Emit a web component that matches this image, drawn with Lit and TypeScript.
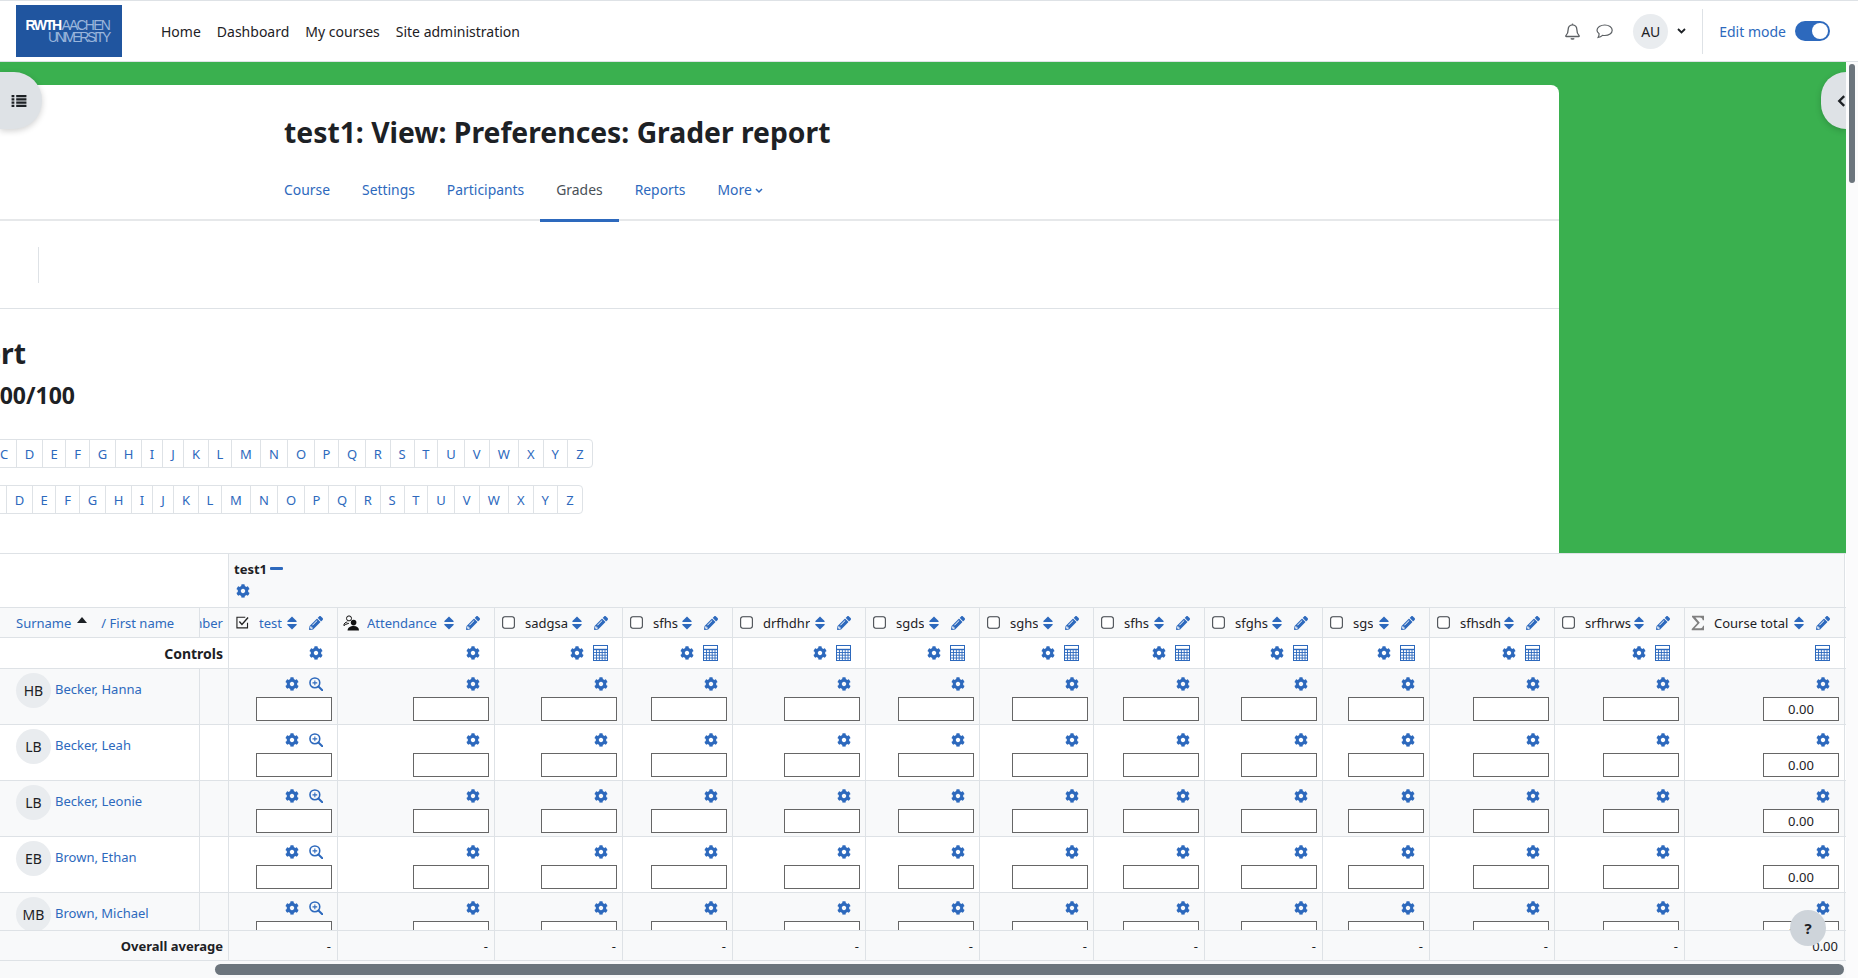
import { LitElement, html, css, nothing } from "lit";
import { customElement } from "lit/decorators.js";

const cog = html`<svg class="ico" viewBox="0 0 512 512"><path fill="currentColor" d="M487.4 315.7l-42.6-24.6c4.3-23.2 4.3-47 0-70.2l42.6-24.6c4.9-2.8 7.1-8.6 5.5-14-11.1-35.6-30-67.8-54.7-94.6-3.8-4.1-10-5.1-14.8-2.3L380.8 110c-17.9-15.4-38.5-27.3-60.8-35.1V25.8c0-5.6-3.9-10.5-9.4-11.7-36.7-8.2-74.3-7.8-109.2 0-5.5 1.2-9.4 6.1-9.4 11.7V75c-22.2 7.9-42.8 19.8-60.8 35.1L88.7 85.5c-4.9-2.8-11-1.9-14.8 2.3-24.7 26.7-43.6 58.9-54.7 94.6-1.7 5.4.6 11.2 5.5 14L67.3 221c-4.3 23.2-4.3 47 0 70.2l-42.6 24.6c-4.9 2.8-7.1 8.6-5.5 14 11.1 35.6 30 67.8 54.7 94.6 3.8 4.1 10 5.1 14.8 2.3l42.6-24.6c17.9 15.4 38.5 27.3 60.8 35.1v49.2c0 5.6 3.9 10.5 9.4 11.7 36.7 8.2 74.3 7.8 109.2 0 5.5-1.2 9.4-6.1 9.4-11.7v-49.2c22.2-7.9 42.8-19.8 60.8-35.1l42.6 24.6c4.9 2.8 11 1.9 14.8-2.3 24.7-26.7 43.6-58.9 54.7-94.6 1.5-5.5-.7-11.3-5.6-14.1zM256 336c-44.1 0-80-35.9-80-80s35.9-80 80-80 80 35.9 80 80-35.9 80-80 80z"/></svg>`;

const pencil = html`<svg class="ico" viewBox="0 0 512 512"><path fill="currentColor" d="M497.9 142.1l-46.1 46.1c-4.7 4.7-12.3 4.7-17 0l-111-111c-4.7-4.7-4.7-12.3 0-17l46.1-46.1c18.7-18.7 49.1-18.7 67.9 0l60.1 60.1c18.8 18.7 18.8 49.1 0 67.9zM284.2 99.8L21.6 362.4.4 483.9c-2.9 16.4 11.4 30.6 27.8 27.8l121.5-21.3 262.6-262.6c4.7-4.7 4.7-12.3 0-17l-111-111c-4.8-4.7-12.4-4.7-17.1 0zM124.1 339.9c-5.5-5.5-5.5-14.3 0-19.8l154-154c5.5-5.5 14.3-5.5 19.8 0s5.5 14.3 0 19.8l-154 154c-5.5 5.5-14.3 5.5-19.8 0zM88 424h48v36.3l-64.5 11.3-31.1-31.1L51.7 376H88v48z"/></svg>`;

const zoomIco = html`<svg class="ico" viewBox="0 0 16 16" fill="none" stroke="currentColor"><circle cx="6.7" cy="6.7" r="5.6" stroke-width="1.8"/><path d="M6.7 4v5.4M4 6.7h5.4" stroke-width="1.2"/><path d="M10.8 10.8l4.4 4.4" stroke-width="2.3" stroke-linecap="round"/></svg>`;

const sortIco = html`<svg class="sort" viewBox="0 0 10 14"><path fill="currentColor" d="M5 .5l4.6 4.6c.3.4.1.9-.4.9H.8c-.5 0-.7-.5-.4-.9zM5 13.500L.4 8.900C.1 8.500.3 8 .8 8h8.400c.5 0 .7.5.4.9z"/></svg>`;

const calc = html`<svg class="calc" viewBox="0 0 15 16" fill="none" stroke="currentColor"><rect x=".5" y=".5" width="14" height="15" stroke-width="1"/><path d="M.5 4.500h14" stroke-width="1.400"/><path d="M.5 7.500h14M.5 10.200h14M.5 13h14M3.500 5v10M6.400 5v10M9.200 5v10M12 5v10" stroke-width=".9"/></svg>`;

const boxIco = html`<svg class="kind" viewBox="0 0 14 14"><rect x=".7" y=".7" width="12.600" height="12.600" rx="2.400" fill="#fff" stroke="#3a3f45" stroke-width="1.100"/></svg>`;

const checkedIco = html`<svg class="kind" viewBox="0 0 14 14" fill="none" stroke="#222"><path d="M12.400 7.400v5.400H1V1.400h9" stroke-width="1.200"/><path d="M3.600 6l2.800 3L13 1.600" stroke-width="1.500"/></svg>`;

const attendanceIco = html`<svg class="kind wide" viewBox="0 0 16 16"><circle cx="6" cy="3.400" r="2.500" fill="none" stroke="#111" stroke-width="1"/><path d="M.8 10.600c0-2.400 2-3.400 3.600-3.600M6 8.200c-1 .6-2.600.4-5 2.400" fill="none" stroke="#111" stroke-width="1"/><circle cx="10.600" cy="7.600" r="2.800" fill="#111"/><path d="M4.600 15.600c0-3 2.600-4.600 6-4.600s5.400 1.600 5.400 4.600z" fill="#111"/></svg>`;

const sigmaIco = html`<svg class="kind wide" viewBox="0 0 14 16"><path fill="#808080" d="M1 .8h12v4.400h-1.300c-.3-1.700-1-2.600-2.800-2.600H4.400L8.800 7.800 3.600 13.200h6c1.500 0 2.100-.9 2.400-2.500H13v4.500H.7v-1.100l5.600-6L1 1.900z"/></svg>`;

const letterWidths: Record<string, number> = {
  A: 27, B: 25, C: 25, D: 26, E: 23, F: 24, G: 26, H: 26, I: 21, J: 21, K: 25, L: 23, M: 29,
  N: 27, O: 27, P: 24, Q: 27, R: 24.5, S: 24, T: 23.6, U: 26.6, V: 25, W: 29, X: 25, Y: 24, Z: 24.6,
};

const tabs = ["Course", "Settings", "Participants", "Grades", "Reports"];

const students = [
  ["HB", "Becker, Hanna"],
  ["LB", "Becker, Leah"],
  ["LB", "Becker, Leonie"],
  ["EB", "Brown, Ethan"],
  ["MB", "Brown, Michael"],
];

type Col = { name: string; kind?: "checked" | "attendance" | "sigma"; link?: boolean };

const columns: Col[] = [
  { name: "test", kind: "checked", link: true },
  { name: "Attendance", kind: "attendance", link: true },
  { name: "sadgsa" },
  { name: "sfhs" },
  { name: "drfhdhr" },
  { name: "sgds" },
  { name: "sghs" },
  { name: "sfhs" },
  { name: "sfghs" },
  { name: "sgs" },
  { name: "sfhsdh" },
  { name: "srfhrws" },
  { name: "Course total", kind: "sigma" },
];

const kindIcon = (c: Col) =>
  c.kind === "checked" ? checkedIco : c.kind === "attendance" ? attendanceIco : c.kind === "sigma" ? sigmaIco : boxIco;

@customElement("app-root")
export class AppRoot extends LitElement {
  static styles = css`
    :host {
      display: block;
      width: 1858px;
      height: 978px;
      overflow: hidden;
      background: #fff;
      font-family: "Noto Sans", "Open Sans", sans-serif;
      color: #1d2125;
      --blue: #2d69bd;
      --line: #dee2e6;
      --soft: #f8f9fa;
      --cols: 200px 29px 109px 157px 128px 110px 133px 114px 114px 111px 118px 107px 125px 130px 160px;
    }
    * {
      box-sizing: border-box;
    }
    a {
      color: var(--blue);
      text-decoration: none;
    }

    /* top bar */
    .nav {
      height: 62px;
      display: flex;
      align-items: center;
      border-top: 1px solid var(--line);
      border-bottom: 1px solid var(--line);
      padding: 0 28px 0 16px;
      font-size: 14px;
    }
    .logo {
      width: 106px;
      height: 52px;
      background: #20559f;
      display: flex;
      flex-direction: column;
      align-items: flex-end;
      justify-content: center;
      padding-right: 13px;
      font-family: "Liberation Sans", sans-serif;
      font-size: 14px;
      color: #9ab6dc;
    }
    .logo span {
      display: block;
      height: 12px;
      line-height: 12px;
      letter-spacing: -1.8px;
      white-space: nowrap;
    }
    .logo span + span {
      letter-spacing: -2.3px;
    }
    .logo b {
      color: #fff;
      letter-spacing: -1.7px;
      margin-right: 1px;
    }
    .menu {
      display: flex;
      gap: 16px;
      margin-left: 39px;
    }
    .menu a {
      color: #1d2125;
    }
    .right {
      margin-left: auto;
      display: flex;
      align-items: center;
    }
    .bell {
      width: 15px;
      height: 17px;
      color: #5c6064;
    }
    .chat {
      width: 17px;
      height: 15px;
      margin-left: 16px;
      color: #5c6064;
    }
    .avatar {
      width: 35px;
      height: 35px;
      border-radius: 50%;
      background: #e9ecef;
      display: flex;
      align-items: center;
      justify-content: center;
      font-size: 14px;
      flex: none;
    }
    .right .avatar {
      margin-left: 20px;
    }
    .caret {
      width: 9px;
      height: 6px;
      margin-left: 9px;
    }
    .divider {
      width: 1px;
      height: 45px;
      background: var(--line);
      margin: 0 16px;
    }
    .switch {
      width: 35px;
      height: 20px;
      border-radius: 10px;
      background: var(--blue);
      margin-left: 9px;
      padding: 2px 2px 2px 17px;
    }
    .switch i {
      display: block;
      width: 16px;
      height: 16px;
      border-radius: 50%;
      background: #fff;
    }

    /* page */
    .body {
      display: flex;
      height: 916px;
    }
    .main {
      position: relative;
      width: 1846px;
      overflow: hidden;
    }
    .rail {
      width: 12px;
      background: #fbfbfc;
      padding: 2px 3px 0;
    }
    .rail i {
      display: block;
      height: 119px;
      border-radius: 3px;
      background: #6c757d;
    }
    .green {
      height: 491px;
      background: #3ab04f;
      padding-top: 23px;
    }
    .card {
      width: 1559px;
      height: 468px;
      background: #fff;
      border-radius: 0 8px 0 0;
      overflow: hidden;
    }
    .head {
      height: 136px;
      border-bottom: 2px solid #e6e8ea;
      padding: 28px 0 0 284px;
    }
    h1 {
      margin: 0;
      font-size: 28.3px;
      line-height: 38px;
      font-weight: 700;
      white-space: nowrap;
    }
    .tabs {
      display: flex;
      margin: 21px 0 0 -16px;
      font-size: 13.9px;
    }
    .tabs a {
      height: 50px;
      padding: 0 16px;
      line-height: 36px;
      white-space: nowrap;
    }
    .tabs a.on {
      color: #495057;
      border-bottom: 3px solid var(--blue);
    }
    .more-caret {
      width: 8px;
      height: 6px;
      margin-left: 3px;
      vertical-align: 1px;
    }
    .tertiary {
      height: 88px;
      border-bottom: 1px solid var(--line);
      padding: 26px 0 0 38px;
    }
    .tertiary i {
      display: block;
      width: 1px;
      height: 36px;
      background: var(--line);
    }
    .clipped {
      display: flex;
      justify-content: flex-end;
      white-space: nowrap;
      font-weight: 700;
    }
    h2.clipped {
      margin: 24px 0 0;
      width: 26px;
      font-size: 28.3px;
      line-height: 40px;
    }
    h3.clipped {
      margin: 2px 0 0;
      width: 75px;
      font-size: 23px;
      line-height: 40px;
    }
    .initials {
      display: flex;
      width: max-content;
      height: 29px;
      border: 1px solid var(--line);
      border-radius: 0 4px 4px 0;
      font-size: 13px;
    }
    .initials.first {
      margin: 24px 0 0 -61px;
    }
    .initials.last {
      margin: 17px 0 0 -71px;
    }
    .initials a {
      display: flex;
      align-items: center;
      justify-content: center;
      border-right: 1px solid var(--line);
    }
    .initials a:last-child {
      border-right: 0;
    }

    /* grader table */
    .grader {
      font-size: 13px;
    }
    .row {
      display: grid;
      grid-template-columns: var(--cols);
      border-bottom: 1px solid var(--line);
    }
    .row > div {
      border-right: 1px solid var(--line);
      min-width: 0;
    }
    .row > .wide-cell {
      grid-column: span 2;
    }
    .group {
      height: 55px;
      border-top: 1px solid var(--line);
    }
    .group .title {
      grid-column: 3 / -1;
      background: var(--soft);
      padding: 6px 0 0 5px;
      color: var(--blue);
    }
    .group .title b {
      color: #1d2125;
      font-size: 13px;
      line-height: 18px;
    }
    .group .title .minus {
      display: inline-block;
      width: 13px;
      height: 3px;
      background: var(--blue);
      margin: 0 0 4px 3px;
      vertical-align: middle;
      border-radius: 1px;
    }
    .group .title .ico {
      display: block;
      margin: 6px 0 0 2px;
    }
    .ico {
      width: 14px;
      height: 14px;
      flex: none;
      color: var(--blue);
    }
    .sort {
      width: 10px;
      height: 14px;
      flex: none;
      color: var(--blue);
    }
    .calc {
      width: 15px;
      height: 16px;
      flex: none;
      color: var(--blue);
    }
    .kind {
      width: 13px;
      height: 13px;
      flex: none;
    }
    .kind.wide {
      width: 16px;
      height: 16px;
    }
    .headers {
      height: 30px;
      background: var(--soft);
    }
    .headers > div {
      display: flex;
      align-items: center;
      white-space: nowrap;
      overflow: hidden;
    }
    .sorter {
      padding-left: 16px;
    }
    .sorter .up {
      width: 10px;
      height: 6px;
      margin: 0 14px 5px 6px;
      flex: none;
    }
    .idnum {
      justify-content: flex-end;
      padding-right: 5px;
    }
    .item {
      padding: 0 14px 0 7px;
    }
    .item.pic {
      padding-left: 5px;
    }
    .item .label {
      margin-left: 10px;
      overflow: hidden;
    }
    .item.pic .label {
      margin-left: 8px;
    }
    .item .sort {
      margin: 0 12px 0 auto;
    }
    .controls {
      height: 31px;
    }
    .controls > div {
      display: flex;
      align-items: center;
      justify-content: flex-end;
      gap: 9px;
      padding-right: 14px;
    }
    .strong {
      font-weight: 700;
    }
    .controls > .strong {
      font-size: 14px;
    }
    .controls > .strong,
    .average > .strong {
      padding-right: 5px;
    }
    .scroller {
      height: 261px;
      overflow: hidden;
    }
    .student {
      height: 56px;
    }
    .student.alt {
      background: var(--soft);
    }
    .student .who {
      display: flex;
      align-items: flex-start;
      padding: 4px 0 0 16px;
      white-space: nowrap;
    }
    .who a {
      margin: 7px 0 0 4px;
    }
    .grade {
      display: flex;
      flex-direction: column;
      align-items: flex-end;
      padding: 8px 5px 0 0;
    }
    .grade .icons {
      display: flex;
      gap: 10px;
      padding-right: 9px;
      height: 20px;
    }
    .grade input {
      width: 76px;
      height: 24px;
      border: 1px solid #666;
      border-radius: 0;
      background: #fff;
      padding: 0;
      margin: 0;
      font: inherit;
      color: #1d2125;
      text-align: center;
    }
    .average {
      height: 31px;
      background: var(--soft);
      border-top: 1px solid var(--line);
    }
    .average > div {
      display: flex;
      align-items: center;
      justify-content: flex-end;
      padding-right: 6px;
    }
    .strip {
      height: 17px;
      background: var(--soft);
      padding: 3px 2px 0 215px;
    }
    .strip i {
      display: block;
      height: 11px;
      border-radius: 6px;
      background: #6c757d;
    }

    /* floating bits */
    .toggle {
      position: absolute;
      top: 10px;
      height: 57px;
      background: #dee2e6;
      box-shadow: 0 2px 6px rgba(0, 0, 0, 0.18);
      display: flex;
      align-items: center;
    }
    .toggle.left {
      left: 0;
      width: 42px;
      border-radius: 0 28px 28px 0;
      padding-left: 11px;
    }
    .toggle.right-side {
      right: 0;
      width: 25px;
      border-radius: 28px 0 0 28px;
      padding-left: 16px;
    }
    .help {
      position: absolute;
      left: 1790px;
      top: 848px;
      width: 36px;
      height: 36px;
      border-radius: 50%;
      background: #ced4da;
      display: flex;
      align-items: center;
      justify-content: center;
      font-weight: 700;
      font-size: 15px;
      color: #1d2125;
    }
  `;

  private initials(cls: string) {
    return html`<div class="initials ${cls}">
      ${Object.keys(letterWidths).map(
        (l) => html`<a href="#" style="width:${letterWidths[l]}px">${l}</a>`
      )}
    </div>`;
  }

  private student(s: string[], i: number) {
    return html`<div class="row student ${i % 2 === 0 ? "alt" : ""}">
      <div class="who"><span class="avatar">${s[0]}</span><a href="#">${s[1]}</a></div>
      <div></div>
      ${columns.map(
        (c, n) => html`<div class="grade">
          <span class="icons">${cog}${n === 0 ? zoomIco : nothing}</span>
          <input value=${c.kind === "sigma" ? "0.00" : ""} aria-label="Grade" />
        </div>`
      )}
    </div>`;
  }

  render() {
    return html`
      <header class="nav">
        <div class="logo">
          <span><b>RWTH</b>AACHEN</span>
          <span>UNIVERSITY</span>
        </div>
        <nav class="menu">
          <a href="#">Home</a>
          <a href="#">Dashboard</a>
          <a href="#">My courses</a>
          <a href="#">Site administration</a>
        </nav>
        <div class="right">
          <svg class="bell" viewBox="0 0 15 17" fill="none" stroke="currentColor" stroke-width="1.3">
            <path d="M7.5 1.8c-2.6 0-4.3 2-4.3 4.4 0 3.6-.9 5-2.3 6.4-.3.4-.1.9.4.9h12.4c.5 0 .7-.5.4-.9-1.4-1.4-2.3-2.8-2.3-6.4 0-2.4-1.7-4.4-4.3-4.4z" />
            <path d="M7.5 1.8V.6" />
            <path d="M6 15.4c.3.7 2.7.7 3 0" stroke-width="1.6" />
          </svg>
          <svg class="chat" viewBox="0 0 17 15" fill="none" stroke="currentColor" stroke-width="1.2">
            <path d="M8.8 1C4.6 1 1 3.2 1 6.2c0 1.4.8 2.6 2.1 3.5 0 1.4-.4 2.8-1 3.8 1.8-.3 3.4-1.2 4.4-2.2.7.1 1.4.2 2.3.2 4.2 0 7.4-2.3 7.4-5.3S13 1 8.8 1z" />
          </svg>
          <span class="avatar">AU</span>
          <svg class="caret" viewBox="0 0 9 6" fill="none" stroke="#1d2125" stroke-width="1.8"><path d="M1 1l3.5 3.5L8 1" /></svg>
          <span class="divider"></span>
          <a href="#">Edit mode</a>
          <span class="switch"><i></i></span>
        </div>
      </header>
      <div class="body">
        <div class="main">
          <div class="green">
            <section class="card">
              <div class="head">
                <h1>test1: View: Preferences: Grader report</h1>
                <div class="tabs">
                  ${tabs.map((t) => html`<a href="#" class=${t === "Grades" ? "on" : ""}>${t}</a>`)}
                  <a href="#">More<svg class="more-caret" viewBox="0 0 8 6" fill="none" stroke="currentColor" stroke-width="1.5"><path d="M1 1l3 3 3-3" /></svg></a>
                </div>
              </div>
              <div class="tertiary"><i></i></div>
              <h2 class="clipped"><span>Grader report</span></h2>
              <h3 class="clipped"><span>100.00/100</span></h3>
              ${this.initials("first")} ${this.initials("last")}
            </section>
          </div>
          <div class="grader">
            <div class="row group">
              <div class="wide-cell"></div>
              <div class="title"><b>test1</b><span class="minus"></span>${cog}</div>
            </div>
            <div class="row headers">
              <div class="sorter">
                <a href="#">Surname</a>
                <svg class="up" viewBox="0 0 10 6"><path d="M5 0l5 6H0z" fill="#1d2125" /></svg>
                <a href="#">/ First name</a>
              </div>
              <div class="idnum"><a href="#">ID number</a></div>
              ${columns.map(
                (c) => html`<div class="item ${c.kind === "attendance" || c.kind === "sigma" ? "pic" : ""}">
                  ${kindIcon(c)}
                  ${c.link ? html`<a class="label" href="#">${c.name}</a>` : html`<span class="label">${c.name}</span>`}
                  ${sortIco}${pencil}
                </div>`
              )}
            </div>
            <div class="row controls">
              <div class="wide-cell strong">Controls</div>
              ${columns.map(
                (c, n) => html`<div>
                  ${c.kind === "sigma" ? nothing : cog}${n > 1 ? calc : nothing}
                </div>`
              )}
            </div>
            <div class="scroller">${students.map((s, i) => this.student(s, i))}</div>
            <div class="row average">
              <div class="wide-cell strong">Overall average</div>
              ${columns.map((c) => html`<div>${c.kind === "sigma" ? "0.00" : "-"}</div>`)}
            </div>
            <div class="strip"><i></i></div>
          </div>
          <div class="toggle left">
            <svg width="16" height="13" viewBox="0 0 16 14" fill="#1d2125"><path d="M0 1h3v2.4H0zM5 1h11v2.4H5zM0 4.6h3V7H0zM5 4.6h11V7H5zM0 8.2h3v2.4H0zM5 8.2h11v2.4H5zM0 11.6h3V14H0zM5 11.6h11V14H5z" /></svg>
          </div>
          <div class="toggle right-side">
            <svg width="10" height="14" viewBox="0 0 10 14" fill="none" stroke="#1d2125" stroke-width="2.6"><path d="M8 1.5L2.5 7 8 12.500" /></svg>
          </div>
          <div class="help">?</div>
        </div>
        <div class="rail"><i></i></div>
      </div>
    `;
  }
}

declare global {
  interface HTMLElementTagNameMap {
    "app-root": AppRoot;
  }
}
